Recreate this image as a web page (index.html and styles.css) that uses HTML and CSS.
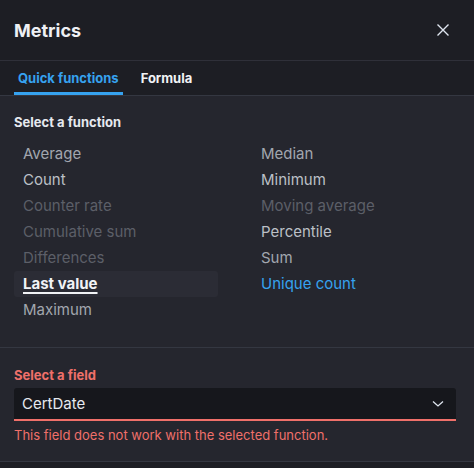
FILE: index.html
```html
<!DOCTYPE html>
<html lang="en">
<head>
    <meta charset="UTF-8">
    <title>Metrics</title>
    <link rel="stylesheet" href="styles.css">
</head>
<body>
    <div class="flyout">
        <div class="header">
            <div class="title">Metrics</div>
            <button class="close-button" aria-label="Close">
                <svg width="14" height="14" viewBox="0 0 14 14"><path d="M1.5 1.5 L12.5 12.5 M12.5 1.5 L1.5 12.5" stroke="#dfe5ef" stroke-width="1.4" fill="none"/></svg>
            </button>
        </div>
        <div class="tabs">
            <div class="tab active">Quick functions</div>
            <div class="tab">Formula</div>
        </div>
        <div class="section">
            <div class="section-title">Select a function</div>
            <div class="function-grid">
                <div class="fn">Average</div>
                <div class="fn">Median</div>
                <div class="fn bright">Count</div>
                <div class="fn bright">Minimum</div>
                <div class="fn disabled">Counter rate</div>
                <div class="fn disabled">Moving average</div>
                <div class="fn disabled">Cumulative sum</div>
                <div class="fn bright">Percentile</div>
                <div class="fn disabled">Differences</div>
                <div class="fn">Sum</div>
                <div class="fn selected">Last value</div>
                <div class="fn link">Unique count</div>
                <div class="fn">Maximum</div>
            </div>
        </div>
        <div class="section field-section">
            <div class="field-label">Select a field</div>
            <div class="select-box">
                <span>CertDate</span>
                <svg width="12" height="8" viewBox="0 0 12 8"><path d="M1 1.5 L6 6 L11 1.5" stroke="#dfe5ef" stroke-width="1.3" fill="none"/></svg>
            </div>
            <div class="field-error">This field does not work with the selected function.</div>
        </div>
        <div class="footer"></div>
    </div>
</body>
</html>
```

FILE: styles.css
```css
body {
    margin: 0;
    padding: 0;
    background-color: #25262e;
    font-family: Inter, "Noto Sans", sans-serif;
    color: #dfe5ef;
}

.flyout {
    width: 474px;
    height: 468px;
    display: flex;
    flex-direction: column;
    overflow: hidden;
}

.header {
    background-color: #1d1e24;
    height: 60px;
    padding: 0 14px;
    display: flex;
    justify-content: space-between;
    align-items: center;
    border-bottom: 1px solid #2f3039;
}

.title {
    font-size: 18px;
    font-weight: 700;
    color: #eef0f4;
}

.close-button {
    background: none;
    border: none;
    padding: 0;
    margin-right: 5px;
    width: 24px;
    height: 24px;
    display: flex;
    align-items: center;
    justify-content: center;
    cursor: pointer;
}

.tabs {
    background-color: #1d1e24;
    height: 34px;
    padding: 0 14px;
    display: flex;
    gap: 14px;
    border-bottom: 1px solid #343741;
}

.tab {
    font-size: 13px;
    font-weight: 700;
    color: #f1f3f6;
    padding: 0 4px;
    display: flex;
    align-items: center;
    border-bottom: 3px solid transparent;
    padding-top: 3px;
}

.tab.active {
    color: #36a2ef;
    border-bottom-color: #36a2ef;
}

.section {
    padding: 17px 14px 0;
    border-bottom: 1px solid #343741;
}

.section-title {
    font-size: 13px;
    font-weight: 700;
    color: #e6e9ef;
    line-height: 18px;
    margin-bottom: 10px;
}

.function-grid {
    display: grid;
    grid-template-columns: 204px 1fr;
    column-gap: 34px;
    padding-bottom: 24px;
}

.fn {
    font-size: 15px;
    line-height: 26px;
    padding-left: 9px;
    color: #a2a6ae;
}

.fn.bright {
    color: #bcc0c7;
}

.fn.disabled {
    color: #5c5f68;
}

.fn.selected {
    background-color: #2b2c35;
    color: #f1f3f6;
    font-weight: 700;
    text-decoration: underline;
    text-decoration-thickness: 2px;
    text-underline-offset: 3px;
    border-radius: 3px;
}

.fn.link {
    color: #36a2ef;
}

.field-section {
    padding: 18px 18px 17px 14px;
}

.field-label {
    font-size: 13px;
    font-weight: 700;
    color: #f0706a;
    line-height: 18px;
    margin-bottom: 4px;
}

.select-box {
    height: 31px;
    background-color: #16171c;
    border-bottom: 2px solid #f0706a;
    border-radius: 3px 3px 0 0;
    padding: 0 12px 0 8px;
    display: flex;
    align-items: center;
    justify-content: space-between;
    font-size: 15px;
    color: #e6e9ef;
}

.field-error {
    font-size: 13px;
    color: #f0706a;
    margin-top: 5px;
    line-height: 18px;
}

.footer {
    flex: 1;
    background-color: #1d1e24;
}
```
